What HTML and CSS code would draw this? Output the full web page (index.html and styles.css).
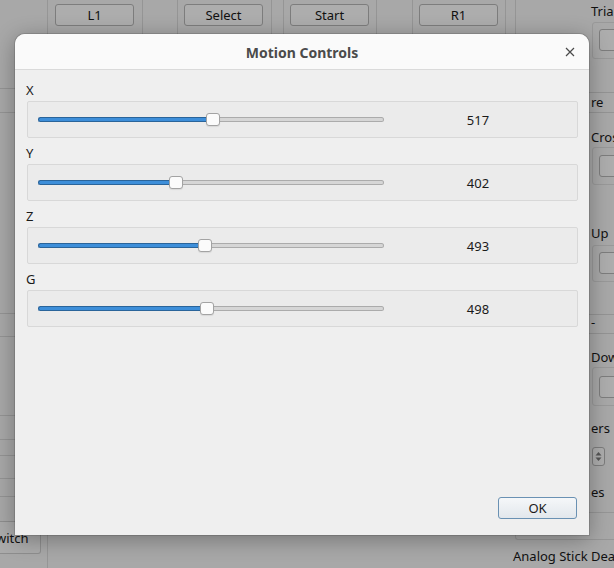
FILE: index.html
```html
<!DOCTYPE html>
<html>
<head>
<meta charset="utf-8">
<title>Motion Controls</title>
<link rel="stylesheet" href="styles.css">
</head>
<body>
<div class="app">
  <div class="col-left">
    <div class="lline l1"></div>
    <div class="lline l2"></div>
    <div class="lline l3"></div>
    <div class="lline l4"></div>
    <div class="lline l5"></div>
    <div class="lbtn"><span>witch</span></div>
  </div>
  <div class="col-mid">
    <div class="top-row">
      <div class="tgrp g1"><div class="bbtn">L1</div></div>
      <div class="tgrp g2"><div class="bbtn">Select</div></div>
      <div class="tgrp g3"><div class="bbtn">Start</div></div>
      <div class="tgrp g4"><div class="bbtn">R1</div></div>
    </div>
  </div>
  <div class="col-right">
    <div class="r-top">
      <div class="r-a"><div class="r-a-grp"></div></div>
      <div class="r-b">
        <div class="rlbl first">Trian</div>
        <div class="rbox b1"><div class="rbtn"></div></div>
        <div class="rline r1">re</div>
        <div class="rlbl cros">Cros</div>
        <div class="rbox b2"><div class="rbtn"></div></div>
        <div class="rlbl up">Up</div>
        <div class="rbox b3"><div class="rbtn"></div></div>
        <div class="rline r2">-</div>
        <div class="rlbl dow">Dow</div>
        <div class="rbox b4"><div class="rbtn"></div></div>
        <div class="rlbl ers">ers</div>
        <div class="spin">
          <svg width="9" height="15" viewBox="0 0 9 15"><path d="M4.5 3 L7.5 6.5 L1.5 6.5 Z" fill="#555"/><path d="M4.5 12 L7.5 8.5 L1.5 8.5 Z" fill="#555"/></svg>
        </div>
        <div class="rlbl es">es</div>
      </div>
    </div>
    <div class="r-bottom-box"></div>
    <div class="r-bottom-lbl">Analog Stick Deadzone</div>
  </div>
</div>

<div class="dialog">
  <div class="titlebar">
    <span></span>
    <span class="title">Motion Controls</span>
    <span class="close">
      <svg width="10" height="10" viewBox="0 0 10 10"><path d="M1 1 L9 9 M9 1 L1 9" stroke="#4a4a4a" stroke-width="1.2" fill="none"/></svg>
    </span>
  </div>
  <div class="dbody">
    <div class="row">
      <div class="axis">X</div>
      <div class="gbox">
        <div class="slider">
          <div class="fill" style="width:175px"></div><div class="rest"></div>
          <div class="handle" style="left:168px"></div>
        </div>
        <div class="val">517</div>
      </div>
    </div>
    <div class="row">
      <div class="axis">Y</div>
      <div class="gbox">
        <div class="slider">
          <div class="fill" style="width:138px"></div><div class="rest"></div>
          <div class="handle" style="left:131px"></div>
        </div>
        <div class="val">402</div>
      </div>
    </div>
    <div class="row">
      <div class="axis">Z</div>
      <div class="gbox">
        <div class="slider">
          <div class="fill" style="width:167px"></div><div class="rest"></div>
          <div class="handle" style="left:160px"></div>
        </div>
        <div class="val">493</div>
      </div>
    </div>
    <div class="row">
      <div class="axis">G</div>
      <div class="gbox">
        <div class="slider">
          <div class="fill" style="width:169px"></div><div class="rest"></div>
          <div class="handle" style="left:162px"></div>
        </div>
        <div class="val">498</div>
      </div>
    </div>
    <div class="foot">
      <div class="okbtn">OK</div>
    </div>
  </div>
</div>
</body>
</html>
```
FILE: styles.css
```css
html, body {
  margin: 0;
  padding: 0;
}
body {
  width: 614px;
  height: 568px;
  overflow: hidden;
  position: relative;
  background: #a8a8a8;
  font-family: "Noto Sans", "Open Sans", "DejaVu Sans", sans-serif;
  font-size: 13px;
  color: #111;
}

/* ---------- background window ---------- */
.app {
  display: flex;
  height: 568px;
}
.col-left {
  width: 47px;
  flex: none;
  border-right: 1px solid #969696;
  display: flex;
  flex-direction: column;
}
.lline {
  border-top: 1px solid #949494;
  border-bottom: 1px solid #949494;
  margin-left: -2px;
}
.l1 { margin-top: 88px; height: 23px; }
.l2 { margin-top: 200px; height: 22px; }
.l3 { margin-top: 78px; height: 23px; }
.l4 { margin-top: 15px; height: 22px; }
.l5 { margin-top: 17px; height: 0; border-bottom: none; }
.lbtn {
  margin-top: 24px;
  width: 40px;
  height: 31px;
  border: 1px solid #8e8e8e;
  border-left: none;
  border-radius: 0 3px 3px 0;
  background: #ababab;
  display: flex;
  align-items: center;
  overflow: hidden;
}
.lbtn span {
  margin-left: -4px;
  white-space: nowrap;
}

.col-mid {
  width: 458px;
  flex: none;
}
.top-row {
  display: flex;
}
.tgrp {
  height: 40px;
  border-left: 1px solid #959595;
  border-right: 1px solid #959595;
  padding: 4px 0 0 6px;
  box-sizing: border-box;
}
.g1 { width: 95px; border-left: none; padding-left: 7px; }
.g2 { width: 95px; margin-left: 34px; }
.g3 { width: 94px; margin-left: 11px; }
.g4 { width: 94px; margin-left: 35px; }
.bbtn {
  width: 79px;
  height: 22px;
  box-sizing: border-box;
  border: 1px solid #7d7d7d;
  border-radius: 3px;
  background: #adadad;
  display: flex;
  align-items: center;
  justify-content: center;
  line-height: 1;
}

.col-right {
  width: 108px;
  flex: none;
  display: flex;
  flex-direction: column;
}
.r-top {
  height: 505px;
  display: flex;
}
.r-a {
  width: 84px;
  flex: none;
}
.r-a-grp {
  margin-left: 9px;
  height: 40px;
  border-left: 1px solid #959595;
}
.r-b {
  width: 24px;
  flex: none;
  display: flex;
  flex-direction: column;
  white-space: nowrap;
}
.rlbl {
  line-height: 17px;
  height: 17px;
  padding-left: 1px;
}
.rlbl.first { margin-top: 3px; }
.rlbl.cros { margin-top: 16px; }
.rlbl.up { margin-top: 40px; }
.rlbl.dow { margin-top: 15px; }
.rlbl.ers { margin-top: 14px; }
.rlbl.es { margin-top: 18px; }
.rbox {
  margin-left: 2px;
  width: 60px;
  flex: none;
  border: 1px solid #999;
  border-radius: 3px;
  padding-left: 6px;
  box-sizing: border-box;
}
.b1 { margin-top: 2px; height: 37px; padding-top: 6px; }
.b2 { margin-top: 1px; height: 38px; padding-top: 7px; }
.b3 { margin-top: 3px; height: 37px; padding-top: 6px; }
.b4 { margin-top: 1px; height: 39px; padding-top: 8px; }
.rbtn {
  width: 40px;
  height: 22px;
  box-sizing: border-box;
  border: 1px solid #7d7d7d;
  border-radius: 3px;
  background: #adadad;
}
.rline {
  margin-left: -10px;
  padding-left: 11px;
  width: 50px;
  flex: none;
  border-top: 1px solid #949494;
  border-bottom: 1px solid #949494;
}
.r1 { margin-top: 33px; height: 19px; line-height: 19px; }
.r2 { margin-top: 32px; height: 18px; line-height: 14px; }
.spin {
  margin-top: 10px;
  margin-left: 2px;
  width: 13px;
  height: 19px;
  box-sizing: border-box;
  border: 1px solid #7d7d7d;
  border-radius: 3px;
  background: #adadad;
  display: flex;
  align-items: center;
  justify-content: center;
}
.r-bottom-box {
  margin-top: 7px;
  margin-left: 9px;
  height: 28px;
  box-sizing: border-box;
  border: 1px solid #969696;
  border-right: none;
  border-radius: 3px 0 0 3px;
}
.r-bottom-lbl {
  margin-top: 8px;
  margin-left: 7px;
  line-height: 17px;
  white-space: nowrap;
}

/* ---------- dialog ---------- */
.dialog {
  position: absolute;
  left: 15px;
  top: 34px;
  width: 574px;
  height: 501px;
  background: #efefef;
  border-radius: 10px 10px 0 0;
  box-shadow: 0 4px 22px rgba(0, 0, 0, 0.32), 0 0 0 1px rgba(0, 0, 0, 0.12);
  display: flex;
  flex-direction: column;
  overflow: hidden;
  color: #1e1e1e;
}
.titlebar {
  height: 35px;
  flex: none;
  background: #fafafa;
  border-bottom: 1px solid #dadada;
  display: grid;
  grid-template-columns: 1fr auto 1fr;
  align-items: center;
}
.title {
  font-weight: bold;
  font-size: 14px;
  color: #4b4b4b;
  padding-top: 1px;
}
.close {
  justify-self: end;
  margin-right: 14px;
  display: flex;
  align-items: center;
  padding-top: 1px;
}
.dbody {
  flex: 1;
  display: flex;
  flex-direction: column;
  padding: 12px 11px 16px 12px;
}
.row + .row {
  margin-top: 7px;
}
.axis {
  line-height: 17px;
  height: 17px;
  margin-left: -1px;
  color: #1a1a1a;
}
.gbox {
  margin-top: 2px;
  height: 37px;
  box-sizing: border-box;
  border: 1px solid #d8d8d8;
  border-radius: 2px;
  background: #ebebeb;
  display: flex;
  align-items: center;
  padding: 0 11px 0 10px;
}
.slider {
  width: 346px;
  height: 13px;
  flex: none;
  position: relative;
  display: flex;
  align-items: center;
}
.fill {
  height: 5px;
  box-sizing: border-box;
  background: #3d8ed9;
  border: 1px solid #2a649a;
  border-right: none;
  border-radius: 3px 0 0 3px;
  flex: none;
}
.rest {
  flex: 1;
  height: 5px;
  box-sizing: border-box;
  background: #d6d6d6;
  border: 1px solid #ababab;
  border-left: none;
  border-radius: 0 3px 3px 0;
}
.handle {
  position: absolute;
  top: 0;
  width: 14px;
  height: 13px;
  box-sizing: border-box;
  background: #fbfbfb;
  border: 1px solid #a3a3a3;
  border-radius: 3px;
  box-shadow: 0 1px 1px rgba(0, 0, 0, 0.08);
}
.val {
  flex: 1;
  text-align: center;
  margin-left: 6px;
  color: #1a1a1a;
}
.foot {
  margin-top: auto;
  display: flex;
  justify-content: flex-end;
}
.okbtn {
  width: 79px;
  height: 22px;
  margin-right: 1px;
  box-sizing: border-box;
  border: 1px solid #6a91b3;
  border-radius: 3px;
  background: linear-gradient(#f5f7f9, #e2e7ec);
  display: flex;
  align-items: center;
  justify-content: center;
  color: #1a1a1a;
  line-height: 1;
}
```
